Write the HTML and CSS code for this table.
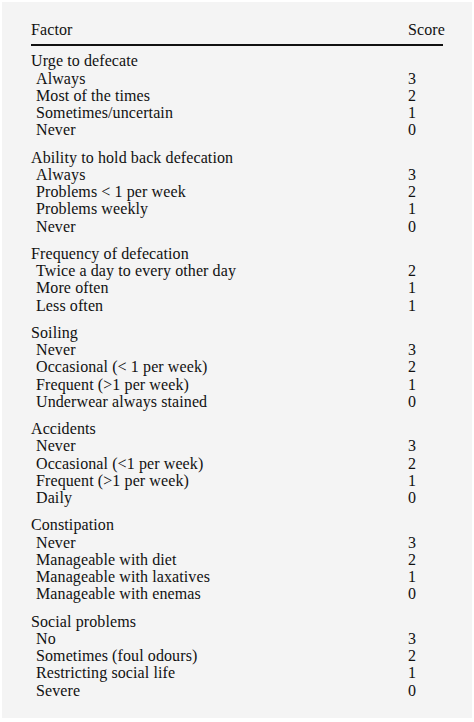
FILE: index.html
```html
<!DOCTYPE html>
<html lang="en">
<head>
<meta charset="utf-8">
<title>Score table</title>
<link rel="stylesheet" href="styles.css">
</head>
<body>
<div class="page">
  <div class="table">
    <div class="head"><span>Factor</span><span>Score</span></div>

    <div class="group">
      <div class="title">Urge to defecate</div>
      <div class="row"><span class="item">Always</span><span class="score">3</span></div>
      <div class="row"><span class="item">Most of the times</span><span class="score">2</span></div>
      <div class="row"><span class="item">Sometimes/uncertain</span><span class="score">1</span></div>
      <div class="row"><span class="item">Never</span><span class="score">0</span></div>
    </div>

    <div class="group">
      <div class="title">Ability to hold back defecation</div>
      <div class="row"><span class="item">Always</span><span class="score">3</span></div>
      <div class="row"><span class="item">Problems &lt; 1 per week</span><span class="score">2</span></div>
      <div class="row"><span class="item">Problems weekly</span><span class="score">1</span></div>
      <div class="row"><span class="item">Never</span><span class="score">0</span></div>
    </div>

    <div class="group">
      <div class="title">Frequency of defecation</div>
      <div class="row"><span class="item">Twice a day to every other day</span><span class="score">2</span></div>
      <div class="row"><span class="item">More often</span><span class="score">1</span></div>
      <div class="row"><span class="item">Less often</span><span class="score">1</span></div>
    </div>

    <div class="group">
      <div class="title">Soiling</div>
      <div class="row"><span class="item">Never</span><span class="score">3</span></div>
      <div class="row"><span class="item">Occasional (&lt; 1 per week)</span><span class="score">2</span></div>
      <div class="row"><span class="item">Frequent (&gt;1 per week)</span><span class="score">1</span></div>
      <div class="row"><span class="item">Underwear always stained</span><span class="score">0</span></div>
    </div>

    <div class="group">
      <div class="title">Accidents</div>
      <div class="row"><span class="item">Never</span><span class="score">3</span></div>
      <div class="row"><span class="item">Occasional (&lt;1 per week)</span><span class="score">2</span></div>
      <div class="row"><span class="item">Frequent (&gt;1 per week)</span><span class="score">1</span></div>
      <div class="row"><span class="item">Daily</span><span class="score">0</span></div>
    </div>

    <div class="group">
      <div class="title">Constipation</div>
      <div class="row"><span class="item">Never</span><span class="score">3</span></div>
      <div class="row"><span class="item">Manageable with diet</span><span class="score">2</span></div>
      <div class="row"><span class="item">Manageable with laxatives</span><span class="score">1</span></div>
      <div class="row"><span class="item">Manageable with enemas</span><span class="score">0</span></div>
    </div>

    <div class="group">
      <div class="title">Social problems</div>
      <div class="row"><span class="item">No</span><span class="score">3</span></div>
      <div class="row"><span class="item">Sometimes (foul odours)</span><span class="score">2</span></div>
      <div class="row"><span class="item">Restricting social life</span><span class="score">1</span></div>
      <div class="row"><span class="item">Severe</span><span class="score">0</span></div>
    </div>
  </div>
</div>
</body>
</html>
```

FILE: styles.css
```css
html, body {
  margin: 0;
  padding: 0;
  background: #ffffff;
}

body {
  font-family: "Liberation Serif", "Times New Roman", serif;
  font-size: 16px;
  letter-spacing: 0.1px;
  color: #111111;
}

.page {
  margin: 2px 2px 4px 2px;
  height: 716px;
  background: #f4f4f4;
  padding: 19px 29px 0 29px;
  box-sizing: border-box;
}

.table {
  display: flex;
  flex-direction: column;
}

.head {
  display: grid;
  grid-template-columns: 1fr 35px;
  line-height: 17.25px;
  padding-bottom: 6px;
  border-bottom: 2px solid #111111;
  margin-bottom: 6px;
}

.group {
  display: flex;
  flex-direction: column;
  margin-bottom: 10px;
}

.title,
.row {
  line-height: 17.25px;
}

.row {
  display: grid;
  grid-template-columns: 1fr 35px;
}

.item {
  padding-left: 5px;
}

.score {
  text-align: left;
}
```
